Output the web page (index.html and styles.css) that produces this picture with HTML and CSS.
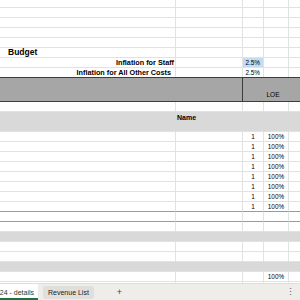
FILE: index.html
```html
<!DOCTYPE html>
<html>
<head>
<meta charset="utf-8">
<link rel="stylesheet" href="styles.css">
</head>
<body>
<div class="sheet">
  <div class="grid">
    <div class="row first"><span></span><span></span><span></span><span></span><span></span></div>
    <div class="row"><span></span><span></span><span></span><span></span><span></span></div>
    <div class="row"><span></span><span></span><span></span><span></span><span></span></div>
    <div class="row"><span></span><span></span><span></span><span></span><span></span></div>
    <div class="row"><span></span><span></span><span></span><span></span><span></span></div>
    <div class="row"><span class="title">Budget</span><span></span><span></span><span></span><span></span></div>
    <div class="row"><span class="label">Inflation for Staff</span><span></span><span class="num sel">2.5%</span><span></span><span></span></div>
    <div class="row last-top"><span class="label pad">Inflation for All Other Costs</span><span></span><span class="num">2.5%</span><span></span><span></span></div>
  </div>
  <div class="header">
    <span class="hcell"></span>
    <span class="hcell loe">LOE</span>
  </div>
  <div class="grid">
    <div class="row"><span></span><span></span><span></span><span></span><span></span></div>
    <div class="band"><span class="name">Name</span></div>
    <div class="row"><span></span><span></span><span class="ctr">1</span><span class="ctr">100%</span><span></span></div>
    <div class="row"><span></span><span></span><span class="ctr">1</span><span class="ctr">100%</span><span></span></div>
    <div class="row"><span></span><span></span><span class="ctr">1</span><span class="ctr">100%</span><span></span></div>
    <div class="row"><span></span><span></span><span class="ctr">1</span><span class="ctr">100%</span><span></span></div>
    <div class="row"><span></span><span></span><span class="ctr">1</span><span class="ctr">100%</span><span></span></div>
    <div class="row"><span></span><span></span><span class="ctr">1</span><span class="ctr">100%</span><span></span></div>
    <div class="row"><span></span><span></span><span class="ctr">1</span><span class="ctr">100%</span><span></span></div>
    <div class="row thick"><span></span><span></span><span class="ctr">1</span><span class="ctr">100%</span><span></span></div>
    <div class="row thick"><span></span><span></span><span></span><span></span><span></span></div>
    <div class="row"><span></span><span></span><span></span><span></span><span></span></div>
    <div class="band short"></div>
    <div class="row"><span></span><span></span><span></span><span></span><span></span></div>
    <div class="row"><span></span><span></span><span></span><span></span><span></span></div>
    <div class="band short"></div>
    <div class="row"><span></span><span></span><span></span><span class="ctr">100%</span><span></span></div>
    <div class="row"><span></span><span></span><span></span><span class="ctr">100%</span><span></span></div>
  </div>
</div>
<div class="tabs">
  <div class="tab active"><span class="clip">2024 - details</span></div>
  <div class="tab other">Revenue List</div>
  <div class="plus">+</div>
  <div class="spacer"></div>
  <div class="more">&#8942;</div>
</div>
</body>
</html>
```

FILE: styles.css
```css
html, body {
  margin: 0;
  padding: 0;
  background: #ffffff;
}
body {
  width: 300px;
  height: 300px;
  overflow: hidden;
  font-family: "Liberation Sans", Arial, sans-serif;
  color: #000;
}
.sheet {
  height: 283px;
  overflow: hidden;
}
.grid {
  display: flex;
  flex-direction: column;
}
.grid:first-child {
  margin-top: -2px;
}
.row {
  display: grid;
  grid-template-columns: 176px 67px 21px 25px 40px;
  height: 10px;
  flex: none;
}
.row > span {
  box-sizing: border-box;
  border-right: 1px solid #e2e2e2;
  border-bottom: 1px solid #e2e2e2;
  font-size: 6.4px;
  line-height: 9px;
  white-space: nowrap;
  padding: 0 1px;
  overflow: visible;
}
.row.last-top {
  height: 9px;
}
.row.last-top > span {
  border-bottom: none;
}
.title {
  font-weight: bold;
  font-size: 8.5px !important;
  padding-left: 8px !important;
  line-height: 9px;
}
.label {
  font-weight: bold;
  font-size: 7.25px !important;
  text-align: right;
  padding-right: 1px !important;
}
.label.pad {
  padding-right: 4px !important;
}
.num {
  text-align: right;
  padding-right: 3px !important;
}
.sel {
  background: #c6dbf0;
}
.ctr {
  text-align: center;
}
.row.thick > span {
  border-bottom: 1px solid #9a9a9a;
}
.header {
  display: grid;
  grid-template-columns: 243px 60px;
  height: 25px;
  box-sizing: border-box;
  background: #a6a6a6;
  border-top: 1px solid #3c3c3c;
  border-bottom: 1px solid #3c3c3c;
}
.hcell {
  border-right: 1px solid #3c3c3c;
}
.loe {
  display: flex;
  align-items: flex-end;
  justify-content: center;
  font-size: 6.6px;
  padding-bottom: 3px;
  box-sizing: border-box;
  border-right: none;
}
.band {
  height: 20px;
  background: #d9d9d9;
  border-bottom: 1px solid #e2e2e2;
  box-sizing: border-box;
  display: flex;
  flex: none;
}
.band.short {
  height: 10px;
}
.name {
  font-weight: bold;
  font-size: 7px;
  margin-left: 177px;
  margin-top: 1px;
  line-height: 9px;
}
.tabs {
  height: 17px;
  background: #efedea;
  display: flex;
  align-items: stretch;
  font-size: 7px;
  color: #222;
  border-top: 1px solid #e0dedb;
  box-sizing: border-box;
}
.tab {
  display: flex;
  align-items: center;
}
.tab.active {
  width: 38px;
  overflow: hidden;
  background: #ffffff;
  border-bottom: 2px solid #1e7145;
  box-sizing: border-box;
  padding-top: 2px;
}
.clip {
  margin-left: -8px;
  white-space: nowrap;
  color: #1f3d2c;
}
.tab.other {
  margin: 2px 0 1px 5px;
  padding: 0 5px;
  background: #e1dfdc;
  border-radius: 2px;
}
.plus {
  display: flex;
  align-items: center;
  margin-left: 23px;
  font-size: 9px;
  color: #444;
}
.spacer {
  flex: 1;
}
.more {
  display: flex;
  align-items: center;
  margin-right: 5px;
  font-size: 9px;
  color: #555;
}
```
